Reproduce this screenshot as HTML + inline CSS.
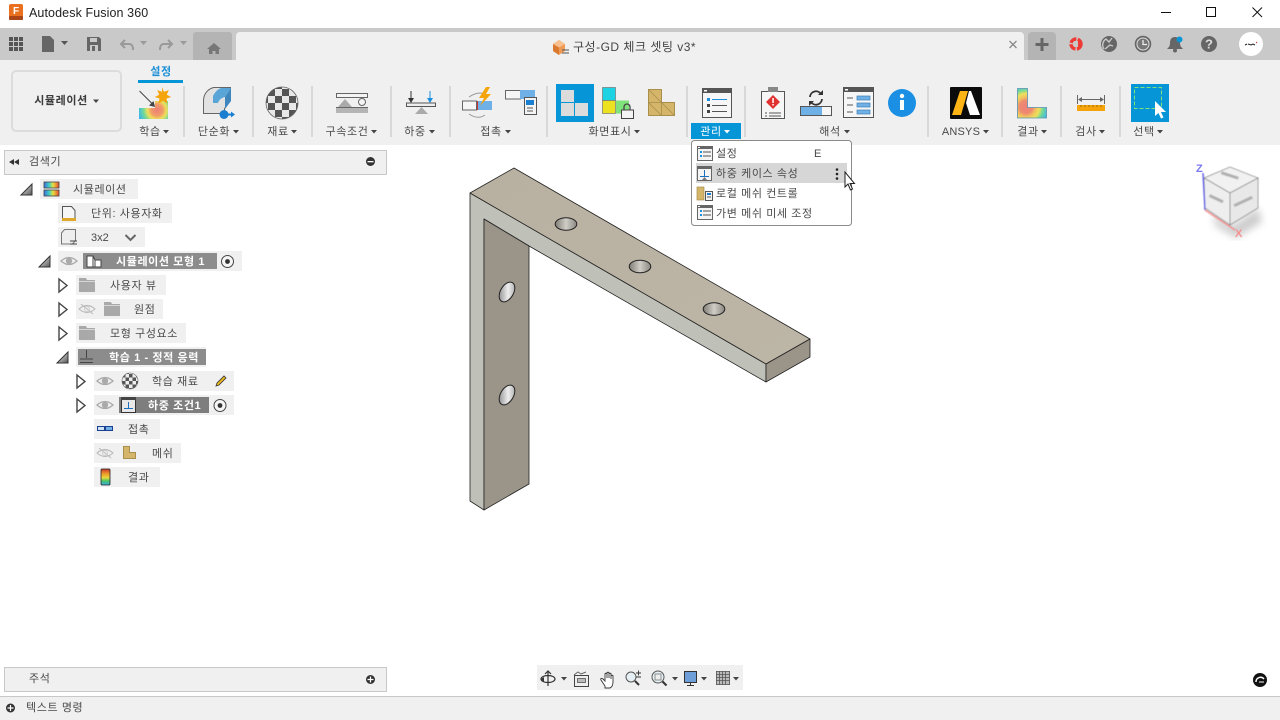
<!DOCTYPE html>
<html><head><meta charset="utf-8"><style>
html,body{margin:0;padding:0;background:#fff;width:1280px;height:720px;overflow:hidden}
svg{position:absolute;left:0;top:0}
text{font-family:"Liberation Sans","Noto Sans CJK KR",sans-serif;font-size:11px;fill:#4a4a4a;letter-spacing:.6px}
.m{text-anchor:middle}
.w{fill:#fff;font-weight:700}
.b{font-weight:700}
</style></head><body>
<svg width="1280" height="720" viewBox="0 0 1280 720" xmlns="http://www.w3.org/2000/svg">
<defs>
<filter id="bl"><feGaussianBlur stdDeviation="0.5"/></filter>
<filter id="bl3"><feGaussianBlur stdDeviation="4"/></filter>
<linearGradient id="tf" x1="0" y1="0" x2="1" y2="1"><stop offset="0" stop-color="#b8b0a0"/><stop offset="1" stop-color="#bdb6a7"/></linearGradient>
<linearGradient id="hole" x1="0" y1="0" x2="1" y2="0"><stop offset="0" stop-color="#7f7d75"/><stop offset=".5" stop-color="#cfcdc6"/><stop offset="1" stop-color="#8a8880"/></linearGradient>
<linearGradient id="hole2" x1="0" y1="1" x2="1" y2="0"><stop offset="0" stop-color="#777"/><stop offset=".55" stop-color="#eee"/><stop offset="1" stop-color="#999"/></linearGradient>
<linearGradient id="tri" x1="0" y1="0" x2="1" y2="1"><stop offset="0" stop-color="#fff"/><stop offset="1" stop-color="#555"/></linearGradient>
<linearGradient id="rain" x1="0" y1="0" x2="1" y2="0"><stop offset="0" stop-color="#3a6fe0"/><stop offset=".35" stop-color="#43d0c0"/><stop offset=".6" stop-color="#e6e040"/><stop offset="1" stop-color="#e84a30"/></linearGradient>
<linearGradient id="rainv" x1="0" y1="0" x2="0" y2="1"><stop offset="0" stop-color="#c8352b"/><stop offset=".3" stop-color="#ef9a2a"/><stop offset=".55" stop-color="#e6d83a"/><stop offset=".75" stop-color="#45c46a"/><stop offset="1" stop-color="#3aa8e0"/></linearGradient>
<radialGradient id="heat" gradientUnits="userSpaceOnUse" cx="157" cy="110" r="19"><stop offset="0" stop-color="#ee7f78"/><stop offset=".3" stop-color="#f09a68"/><stop offset=".5" stop-color="#eee05a"/><stop offset=".72" stop-color="#6fd89a"/><stop offset="1" stop-color="#3cb6ea"/></radialGradient>
<radialGradient id="heat2" gradientUnits="userSpaceOnUse" cx="1026" cy="107" r="23"><stop offset="0" stop-color="#ee7f78"/><stop offset=".28" stop-color="#ee8a70"/><stop offset=".42" stop-color="#f2c060"/><stop offset=".58" stop-color="#eee05a"/><stop offset=".75" stop-color="#6fd89a"/><stop offset="1" stop-color="#3cb6ea"/></radialGradient>
<pattern id="chk" width="14" height="14" patternUnits="userSpaceOnUse" x="268" y="89"><rect width="14" height="14" fill="#e8e8e8"/><rect width="7" height="7" fill="#555"/><rect x="7" y="7" width="7" height="7" fill="#555"/></pattern>
<pattern id="chk2" width="7" height="7" patternUnits="userSpaceOnUse" x="122" y="374"><rect width="7" height="7" fill="#eee"/><rect width="3.500" height="3.500" fill="#555"/><rect x="3.500" y="3.500" width="3.500" height="3.500" fill="#555"/></pattern>
<g id="eye"><path d="M-8 0Q0-7 8 0Q0 7-8 0Z" fill="none" stroke="#aaa" stroke-width="1.300"/><circle r="3.200" fill="#aaa"/></g>
<g id="eyeoff"><path d="M-8 0Q0-7 8 0Q0 7-8 0Z" fill="none" stroke="#bbb" stroke-width="1.100"/><path d="M-6-5L6 5" stroke="#bbb" stroke-width="1.100"/><circle r="2.500" fill="none" stroke="#ccc"/></g>
<g id="folder"><path d="M0 1h7l1 2h8v12H0Z" fill="#a9a9a9"/><rect y="4" width="16" height="1" fill="#d5d5d5"/></g>
<g id="closed"><path d="M1 0L9 6.500L1 13Z" fill="#fff" stroke="#444" stroke-width="1.400"/></g>
<g id="open"><path d="M11 0V11H0Z" fill="url(#tri)" stroke="#333" stroke-width="1"/></g>
<g id="radio"><circle r="6" fill="#f6f6f6" stroke="#444" stroke-width="1"/><circle r="2.400" fill="#333"/></g>
<g id="win"><rect x=".5" y=".5" width="15" height="14" fill="#f4f4f4" stroke="#666"/><rect width="16" height="3" fill="#666"/><rect x="1" y="1" width="2" height="1" fill="#fff"/><rect x="3" y="5" width="2" height="2" fill="#1a8fe0"/><rect x="3" y="9" width="2" height="2" fill="#1a8fe0"/><path d="M6 6h8M6 10h8" stroke="#555"/></g>
</defs>

<!-- title bar -->
<rect width="1280" height="28" fill="#fff"/>
<rect x="9" y="4" width="14" height="16" rx="2" fill="#e8701e"/><rect x="9" y="16" width="14" height="4" rx="1" fill="#a8461a"/>
<text x="13" y="14" style="font-size:10px;font-weight:700;fill:#fff;letter-spacing:0">F</text>
<text x="29" y="17" style="font-size:12.500px;fill:#222;letter-spacing:.1px">Autodesk Fusion 360</text>
<path d="M1161 12.500H1171" stroke="#111" stroke-width="1"/>
<rect x="1206.500" y="7.500" width="9" height="9" fill="none" stroke="#111"/>
<path d="M1252.500 7.500L1262 17M1262 7.500L1252.500 17" stroke="#111" stroke-width="1"/>

<!-- top gray bar -->
<rect y="28" width="1280" height="32" fill="#c9c9c9"/>
<rect x="193" y="32" width="39" height="28" rx="3" fill="#b4b4b4"/><rect x="193" y="50" width="39" height="10" fill="#b4b4b4"/>
<path d="M236 60V36a4 4 0 0 1 4-4H1020a4 4 0 0 1 4 4V60Z" fill="#f0f0f0"/>
<path d="M1028 60V36a4 4 0 0 1 4-4H1052a4 4 0 0 1 4 4V60Z" fill="#b4b4b4"/>
<path d="M1042 38V51M1035.500 44.500H1048.500" stroke="#666" stroke-width="3"/>
<!-- grid -->
<g fill="#555"><rect x="9" y="37" width="4" height="4"/><rect x="14" y="37" width="4" height="4"/><rect x="19" y="37" width="4" height="4"/><rect x="9" y="42" width="4" height="4"/><rect x="14" y="42" width="4" height="4"/><rect x="19" y="42" width="4" height="4"/><rect x="9" y="47" width="4" height="4"/><rect x="14" y="47" width="4" height="4"/><rect x="19" y="47" width="4" height="4"/></g>
<path d="M42 36h8l4 4v12H42Z" fill="#666"/><path d="M61 41h7l-3.500 4Z" fill="#555"/>
<path d="M87 37h12l2 2v12H87Z" fill="#666"/><rect x="90" y="38" width="7" height="4" fill="#c9c9c9"/><rect x="90" y="45" width="8" height="6" fill="#c9c9c9"/><rect x="92" y="46" width="3" height="5" fill="#666"/>
<path d="M125 40l-4 4 4 4M122 44h7c3 0 4 2 4 6" fill="none" stroke="#999" stroke-width="2"/><path d="M140 41h7l-3.500 4Z" fill="#999"/>
<path d="M168 40l4 4-4 4M171 44h-7c-3 0-4 2-4 6" fill="none" stroke="#999" stroke-width="2"/><path d="M180 41h7l-3.500 4Z" fill="#999"/>
<path d="M207 49l7-6 7 6h-2v5h-3.500v-3h-3v3H209v-5Z" fill="#777"/>
<!-- doc tab title -->
<path d="M553 44l6-4 6 4v7l-6 4-6-4Z" fill="#ef9a55"/><path d="M553 44l6 3.500 6-3.500-6-4Z" fill="#f7c08e"/><path d="M559 47.500V55l-6-4v-7Z" fill="#d97a30"/>
<path d="M562 50h7M562 53h7" stroke="#555"/>
<text x="573" y="51" style="font-size:12px;letter-spacing:.5px;fill:#444">구성-GD 체크 셋팅 v3*</text>
<path d="M1009.500 41l7 7M1016.500 41l-7 7" stroke="#888" stroke-width="1.300"/>
<!-- right icons -->
<circle cx="1076" cy="44" r="5" fill="none" stroke="#ee3a35" stroke-width="3.400" stroke-dasharray="7 1.400"/><rect x="1078" y="41" width="1.800" height="6" fill="#ee3a35"/>
<circle cx="1109" cy="44" r="8" fill="#666"/><path d="M1104 49a7 7 0 0 1 2-10l3 3 3-4M1105 49l5-4 3 1" fill="none" stroke="#c9c9c9" stroke-width="1.400"/>
<circle cx="1143" cy="44" r="7.500" fill="#777" stroke="#666" stroke-width="1.500"/><circle cx="1143" cy="44" r="6" fill="none" stroke="#ddd"/><path d="M1143 40v4.500h4" fill="none" stroke="#eee" stroke-width="1.300"/>
<path d="M1175 37c4 0 5 3 5 6s1 4 3 6h-16c2-2 3-3 3-6s1-6 5-6Z" fill="#666"/><circle cx="1175" cy="50.500" r="2" fill="#666"/><circle cx="1179.500" cy="39.500" r="3" fill="#0696d7"/>
<circle cx="1209" cy="44" r="8" fill="#666"/>
<text x="1209" y="48.500" class="m" style="font-size:13px;font-weight:700;fill:#ddd;letter-spacing:0">?</text>
<circle cx="1251" cy="44" r="12" fill="#fff"/><path d="M1245 45l2-1M1248 44l3 1 2-1 2 1" stroke="#222" fill="none"/><path d="M1256 43l1-1" stroke="#c33"/>

<!-- toolbar -->
<rect y="60" width="1280" height="85" fill="#f0f0f0"/>
<rect x="12" y="71" width="109" height="60" rx="4" fill="#f0f0f0" stroke="#dcdcdc" stroke-width="2"/>
<text x="61" y="104" class="m b" style="fill:#3c3c3c">시뮬레이션</text><path d="M93 99.500h6l-3 3.500Z" fill="#444"/>
<text x="161" y="75" class="m b" style="fill:#1a8fd6">설정</text>
<rect x="138" y="80" width="45" height="3" fill="#0696d7"/>
<g fill="#d8d8d8"><rect x="183" y="86" width="2" height="51"/><rect x="252" y="86" width="2" height="51"/><rect x="311" y="86" width="2" height="51"/><rect x="390" y="86" width="2" height="51"/><rect x="449" y="86" width="2" height="51"/><rect x="546" y="86" width="2" height="51"/><rect x="686" y="86" width="2" height="51"/><rect x="744" y="86" width="2" height="51"/><rect x="927" y="86" width="2" height="51"/><rect x="1001" y="86" width="2" height="51"/><rect x="1060" y="86" width="2" height="51"/><rect x="1119" y="86" width="2" height="51"/></g>

<!-- study -->
<path d="M139 108h16v-7h13v18h-29Z" fill="url(#heat)"/>
<path d="M139.500 91l13 13" stroke="#444" stroke-width="1"/><path d="M155 107l-6-1.500 4.500-4.500Z" fill="#444"/>
<path d="M162 87l1.900 4.700 4.900-1.600-2 4.700 4.400 2.200-4.700 1.500.9 5-4.400-2.700-4.400 2.700.9-5-4.700-1.500 4.400-2.200-2-4.700 4.900 1.600Z" fill="#f5a50b"/>
<!-- simplify -->
<path d="M203.500 113.500V101c0-8 5-12 10-13.500h17v13l-6 8v5Z" fill="#e2e2e2" stroke="#666" stroke-width="1"/>
<path d="M213 96c2-4 5-7 8-8h10l-6 9c-4 1-6 3-7 6h-5Z" fill="#5aa5d8"/><path d="M231 88v13l-6 8V97Z" fill="#3f86bd"/>
<circle cx="224" cy="114.500" r="4.500" fill="#1a7fd0"/><path d="M228 113.500h3v-2l4 3-4 3v-2h-3Z" fill="#1a7fd0"/>
<!-- material -->
<circle cx="282" cy="103" r="16" fill="url(#chk)"/>
<circle cx="282" cy="103" r="16" fill="none" stroke="#666" stroke-width=".8"/>
<!-- constraint -->
<rect x="336.500" y="93.500" width="31" height="4" fill="#f4f4f4" stroke="#666"/>
<path d="M338 107l7-8 7 8Z" fill="#aaa"/><circle cx="362" cy="102" r="3.500" fill="#f4f4f4" stroke="#666"/>
<rect x="336" y="107" width="32" height="6" fill="#b5b5b5"/><path d="M336 107.500H368" stroke="#666"/>
<!-- load -->
<path d="M411 91v11M430 91v11" stroke="#333" stroke-width="1"/><path d="M408 98l3 5 3-5Z" fill="#333"/><path d="M427 98l3 5 3-5Z" fill="#1a8fe0"/><path d="M430 91v7" stroke="#1a8fe0"/>
<rect x="406.500" y="103" width="29" height="3.500" fill="#eee" stroke="#555"/>
<path d="M415 114l6.500-7 6.500 7Z" fill="#aaa"/>
<!-- contact -->
<rect x="462.500" y="101" width="14" height="9" fill="#f6f6f6" stroke="#666"/><rect x="477" y="101" width="15" height="9" fill="#6fb0e6"/><rect x="477" y="101" width="1" height="9" fill="#c33"/>
<path d="M469 97q9-6 16-3M469 114q9 6 16 1" fill="none" stroke="#999" stroke-width="1"/>
<path d="M486 87l-7 11h5l-4 8 11-12h-5l4-7Z" fill="#f5a50b"/>
<rect x="505.500" y="90.500" width="15" height="8.500" fill="#f6f6f6" stroke="#666"/><rect x="520" y="90" width="15" height="9" fill="#6fb0e6"/>
<rect x="524.500" y="97.500" width="12" height="17" fill="#f4f4f4" stroke="#555"/><rect x="526" y="100" width="8" height="5" fill="#1a7fd0"/><path d="M527 108h6M527 111h6" stroke="#555"/>
<!-- display -->
<rect x="556" y="84" width="38" height="38" fill="#0696d7"/>
<rect x="561" y="90" width="13" height="12" fill="#dcdcdc"/><rect x="561" y="103" width="13" height="13" fill="#dcdcdc"/><rect x="575" y="103" width="13" height="13" fill="#dcdcdc"/>
<rect x="602.500" y="87.500" width="13" height="13" fill="#1dd3e3" stroke="#777" stroke-width=".7"/><rect x="602.500" y="100.500" width="13" height="13" fill="#ece220" stroke="#777" stroke-width=".7"/><rect x="616" y="100.500" width="13" height="13" fill="#7fe27a"/>
<path d="M624 110v-3a3 3 0 0 1 6 0v3" fill="none" stroke="#444" stroke-width="1.300"/><rect x="621.500" y="110" width="12" height="8.500" fill="#f4f4f4" stroke="#444"/>
<path d="M648.500 89.500h13v13h13v13h-26Z" fill="#d4b56a" stroke="#a88f4c"/><path d="M648.500 102.500h26M661.500 102.500v13M648.500 89.500l13 13M648.500 102.500l13 13M661.500 102.500l13 13" stroke="#a88f4c" fill="none" stroke-width=".8"/>
<!-- manage -->
<rect x="702.500" y="88.500" width="29" height="29" fill="#f6f6f6" stroke="#555"/><rect x="702" y="88" width="30" height="5" fill="#555"/><rect x="704" y="90" width="3" height="1.500" fill="#fff"/>
<rect x="707" y="98" width="3" height="3" fill="#1a8fe0"/><path d="M712 99.500h15" stroke="#1a8fe0"/><rect x="707" y="104" width="3" height="3" fill="#444"/><path d="M712 105.500h15" stroke="#555"/><rect x="707" y="110" width="3" height="3" fill="#444"/><path d="M712 111.500h15" stroke="#555"/>
<rect x="691" y="123" width="50" height="16" fill="#0696d7"/>
<!-- solve -->
<rect x="761.500" y="91.500" width="23" height="27" fill="#f6f6f6" stroke="#555"/><rect x="768" y="87" width="10" height="5" fill="#888"/>
<path d="M773 95l7 7-7 7-7-7Z" fill="#e03030"/><rect x="772.300" y="98" width="1.500" height="5" fill="#fff"/><rect x="772.300" y="104" width="1.500" height="1.500" fill="#fff"/>
<path d="M765 113h2M765 116h2M769 113h12M769 116h12" stroke="#555" stroke-width=".9"/>
<path d="M810 97a6 6 0 0 1 11-3M822 99a6 6 0 0 1-11 3" fill="none" stroke="#333" stroke-width="1.800"/><path d="M823 90v5h-5Z M809 106v-5h5Z" fill="#333"/>
<rect x="800.500" y="106.500" width="31" height="9" fill="#f6f6f6" stroke="#555"/><rect x="801" y="107" width="21" height="8" fill="#6fb0e6"/>
<rect x="843.500" y="87.500" width="30" height="30" fill="#f6f6f6" stroke="#555"/><rect x="843" y="87" width="31" height="5" fill="#555"/><rect x="845" y="89" width="3" height="1.500" fill="#fff"/>
<path d="M847 98h6M847 105h6M847 112h6" stroke="#555"/><rect x="857" y="96" width="13" height="4" fill="#6fb0e6" stroke="#3d7fb5" stroke-width=".7"/><rect x="857" y="103" width="13" height="4" fill="#6fb0e6" stroke="#3d7fb5" stroke-width=".7"/><rect x="857" y="110" width="13" height="4" fill="#6fb0e6" stroke="#3d7fb5" stroke-width=".7"/>
<circle cx="902" cy="103" r="14" fill="#1b8fe3"/><circle cx="902" cy="96" r="2.200" fill="#fff"/><rect x="900" y="100" width="4" height="10" fill="#fff"/>
<!-- ansys -->
<rect x="950" y="87" width="32" height="32" rx="1" fill="#0b0b0b"/>
<path d="M952 115L960 91H968L961 115Z" fill="#fdb515"/><path d="M969 91H971L980 115H970L966 103Z" fill="#fff"/>
<!-- results -->
<path d="M1017.500 88.500h10v19h19v10.500h-29Z" fill="url(#heat2)" stroke="#5a8fb0" stroke-width=".8"/>
<!-- inspect -->
<path d="M1077.500 95v9M1104.500 95v9M1079 99.500h24" stroke="#666" stroke-width="1"/><path d="M1082 97l-4 2.500 4 2.500ZM1100 97l4 2.500-4 2.500Z" fill="#666"/>
<rect x="1077" y="105" width="28" height="6" fill="#f5a50b"/><path d="M1081 105v2M1085 105v2M1089 105v2M1093 105v2M1097 105v2M1101 105v2" stroke="#8a5d00" stroke-width=".8"/>
<!-- select -->
<rect x="1131" y="84" width="38" height="38" fill="#0696d7"/>
<rect x="1134.500" y="87.500" width="27" height="21" fill="none" stroke="#7fe27a" stroke-dasharray="4 2"/>
<path d="M1155 101v15l3.500-3 2.500 5.500 2.500-1-2.500-5.500h5Z" fill="#fff"/>

<!-- ribbon labels -->
<text x="150" y="135" class="m">학습</text><path d="M163 130h6l-3 3.500Z" fill="#444"/>
<text x="214" y="135" class="m">단순화</text><path d="M233 130h6l-3 3.500Z" fill="#444"/>
<text x="278" y="135" class="m">재료</text><path d="M291 130h6l-3 3.500Z" fill="#444"/>
<text x="347" y="135" class="m">구속조건</text><path d="M371 130h6l-3 3.500Z" fill="#444"/>
<text x="415" y="135" class="m">하중</text><path d="M429 130h6l-3 3.500Z" fill="#444"/>
<text x="491" y="135" class="m">접촉</text><path d="M505 130h6l-3 3.500Z" fill="#444"/>
<text x="610" y="135" class="m">화면표시</text><path d="M634 130h6l-3 3.500Z" fill="#444"/>
<text x="711" y="135" class="m" style="fill:#fff">관리</text><path d="M724 130h6l-3 3.500Z" fill="#fff"/>
<text x="830" y="135" class="m">해석</text><path d="M844 130h6l-3 3.500Z" fill="#444"/>
<text x="961" y="135" class="m" style="letter-spacing:.2px">ANSYS</text><path d="M983 130h6l-3 3.500Z" fill="#444"/>
<text x="1028" y="135" class="m">결과</text><path d="M1041 130h6l-3 3.500Z" fill="#444"/>
<text x="1086" y="135" class="m">검사</text><path d="M1099 130h6l-3 3.500Z" fill="#444"/>
<text x="1144" y="135" class="m">선택</text><path d="M1157 130h6l-3 3.500Z" fill="#444"/>

<!-- model -->
<g stroke="#222" stroke-width=".8" stroke-linejoin="round">
<path d="M470 193L766 364V382L529 246L484 219V510L470 501Z" fill="#bfc0b8"/>
<path d="M484 219L529 246V484L484 510Z" fill="#9b9589"/>
<path d="M514 168L810 339L766 364L470 193Z" fill="url(#tf)"/>
<path d="M766 364L810 339V357L766 382Z" fill="#9b9589"/>
<ellipse cx="566" cy="224" rx="10.800" ry="6.300" fill="url(#hole)" stroke-width="1"/>
<ellipse cx="640" cy="266.500" rx="10.800" ry="6.300" fill="url(#hole)" stroke-width="1"/>
<ellipse cx="714" cy="309" rx="10.800" ry="6.300" fill="url(#hole)" stroke-width="1"/>
<ellipse cx="507" cy="292" rx="6.500" ry="10.800" transform="rotate(30 507 292)" fill="url(#hole2)" stroke-width="1"/>
<ellipse cx="507" cy="395" rx="6.500" ry="10.800" transform="rotate(30 507 395)" fill="url(#hole2)" stroke-width="1"/>
</g>

<!-- browser header -->
<rect x="4.500" y="150.500" width="382" height="24" fill="#f0f0f0" stroke="#c8c8c8"/>
<path d="M14 159l-5 3 5 3ZM19 159l-5 3 5 3Z" fill="#333"/>
<text x="29" y="165">검색기</text>
<circle cx="370.500" cy="161.500" r="4.500" fill="#333"/><rect x="367.500" y="161" width="6" height="1.300" fill="#fff"/>

<!-- tree rows -->
<g fill="#f0f0f0">
<rect x="40" y="179" width="98" height="20"/><rect x="58" y="203" width="114" height="20"/><rect x="58" y="227" width="87" height="20"/><rect x="58" y="251" width="184" height="20"/>
<rect x="76" y="275" width="90" height="20"/><rect x="76" y="299" width="87" height="20"/><rect x="76" y="323" width="110" height="20"/><rect x="76" y="347" width="130" height="20"/>
<rect x="94" y="371" width="140" height="20"/><rect x="94" y="395" width="140" height="20"/><rect x="94" y="419" width="66" height="20"/><rect x="94" y="443" width="87" height="20"/><rect x="94" y="467" width="66" height="20"/>
</g>
<use href="#open" x="21" y="184"/><use href="#open" x="39" y="256"/><use href="#open" x="57" y="352"/>
<use href="#closed" x="58" y="279"/><use href="#closed" x="58" y="303"/><use href="#closed" x="58" y="327"/><use href="#closed" x="76" y="375"/><use href="#closed" x="76" y="399"/>

<!-- row 1 -->
<rect x="44" y="182" width="15" height="6" fill="url(#rain)" stroke="#444" stroke-width=".8"/><rect x="44" y="190" width="15" height="6" fill="url(#rain)" stroke="#444" stroke-width=".8"/>
<text x="73" y="193">시뮬레이션</text>
<!-- units -->
<path d="M62.500 206.500h9l3.500 4v8h-12.500Z" fill="#f6f6f6" stroke="#555"/><rect x="62" y="218" width="14" height="3" fill="#e0a82a"/>
<text x="91" y="217">단위: 사용자화</text>
<!-- 3x2 -->
<path d="M61.500 233l3-3.500h11v11l-3 3.500h-11Z" fill="#eee" stroke="#777"/><path d="M70 241h7M70 244h7" stroke="#444"/>
<text x="91" y="241" style="letter-spacing:0">3x2</text>
<path d="M125.500 235l5 5 5-5" fill="none" stroke="#666" stroke-width="2"/>
<!-- model row -->
<use href="#eye" x="69" y="261"/>
<rect x="83" y="253" width="134" height="16" fill="#8c8c8c"/>
<path d="M87 256h6l2 4h6v7H87Z" fill="#fff" stroke="#444"/><path d="M93 256v11M95 260v7" stroke="#444"/>
<text x="116" y="265" class="w">시뮬레이션 모형 1</text>
<use href="#radio" x="227.500" y="261.500"/>
<!-- folders -->
<use href="#folder" x="79" y="277"/><text x="110" y="289">사용자 뷰</text>
<use href="#eyeoff" x="87" y="309"/><use href="#folder" x="104" y="301"/><text x="134" y="313">원점</text>
<use href="#folder" x="79" y="325"/><text x="110" y="337">모형 구성요소</text>
<!-- study row -->
<rect x="78" y="349" width="128" height="16" fill="#8c8c8c"/>
<path d="M86.500 350v8M80 359h13M80 362.500h13" stroke="#444" fill="none"/>
<text x="109" y="361" class="w">학습 1 - 정적 응력</text>
<!-- material -->
<use href="#eye" x="105" y="381"/><circle cx="130" cy="381" r="8" fill="url(#chk2)" stroke="#666" stroke-width=".6"/>
<text x="152" y="385">학습 재료</text>
<path d="M216 386l1-3 7-7 2 2-7 7Z" fill="#e9b520" stroke="#333" stroke-width=".8"/>
<!-- load cond -->
<use href="#eye" x="105" y="405"/>
<rect x="119" y="397" width="90" height="16" fill="#7e7e7e"/>
<rect x="121.500" y="397.500" width="14" height="15" fill="#e8e8e8" stroke="#333"/><rect x="121" y="397" width="15" height="3" fill="#444"/><path d="M128.500 402v6M124 408.500h9" stroke="#1a6fc0"/>
<text x="148" y="409" class="w">하중 조건1</text>
<use href="#radio" x="220" y="405.500"/>
<!-- contact -->
<rect x="97.500" y="426.500" width="7" height="4" fill="#cfe3f5" stroke="#1a3f90"/><rect x="105.500" y="426.500" width="7" height="4" fill="#6fb0e6" stroke="#1a3f90"/>
<text x="128" y="433">접촉</text>
<!-- mesh -->
<use href="#eyeoff" x="105" y="453"/>
<path d="M123.500 446.500h6v6h6v6h-12Z" fill="#d4b56a" stroke="#a88f4c"/>
<text x="152" y="457">메쉬</text>
<!-- results -->
<rect x="101" y="469" width="9" height="16" rx="1" fill="url(#rainv)" stroke="#222" stroke-width=".8"/>
<text x="128" y="481">결과</text>

<!-- dropdown -->
<rect x="691.500" y="140.500" width="160" height="85" rx="3" fill="#fff" stroke="#8a8a8a"/>
<rect x="696" y="163" width="151" height="20" fill="#d6d6d6"/>
<use href="#win" x="697" y="146"/><text x="716" y="157">설정</text><text x="814" y="157" style="letter-spacing:0">E</text>
<rect x="697.500" y="166.500" width="14" height="14" fill="#f4f4f4" stroke="#666"/><rect x="697" y="166" width="15" height="3" fill="#666"/><path d="M704.500 170v6M700 176.500h9" stroke="#1a6fc0"/><path d="M702 180l2.500-3 2.500 3Z" fill="#777"/>
<text x="716" y="177">하중 케이스 속성</text>
<circle cx="837" cy="169.500" r="1.300" fill="#222"/><circle cx="837" cy="174" r="1.300" fill="#222"/><circle cx="837" cy="178.500" r="1.300" fill="#222"/>
<rect x="697" y="187" width="7" height="13" fill="#d4b56a" stroke="#a88f4c" stroke-width=".7"/><rect x="705.500" y="191.500" width="7" height="9" fill="#f4f4f4" stroke="#555"/><rect x="707" y="193" width="4" height="2" fill="#1a7fd0"/><path d="M707 197h4" stroke="#555"/>
<text x="716" y="197">로컬 메쉬 컨트롤</text>
<use href="#win" x="697" y="205"/><text x="716" y="217">가변 메쉬 미세 조정</text>
<path d="M845 172v15l3-3 2.500 6 2-1-2.500-5.500h4.500Z" fill="#fff" stroke="#222" stroke-width="1"/>

<!-- view cube -->
<path d="M1212 214L1232 226L1258 208L1262 222L1236 238L1216 226Z" fill="#ccc" filter="url(#bl3)"/>
<g filter="url(#bl)">
<path d="M1204 178L1230 167L1258 178L1230 193Z" fill="#f1f1f1" stroke="#8a8a8a" stroke-width=".8"/>
<path d="M1204 178L1230 193V225L1205 208Z" fill="#eeeeee" stroke="#8a8a8a" stroke-width=".8"/>
<path d="M1230 193L1258 178V208L1230 225Z" fill="#e8e8e8" stroke="#8a8a8a" stroke-width=".8"/>
<path d="M1203 173L1205 210" stroke="#5a5ae8" stroke-width="1.400"/>
<path d="M1205 210L1235 230" stroke="#ef8f8f" stroke-width="1.400"/>
<g fill="#b0b0b0"><rect x="1221" y="174" width="18" height="3" transform="rotate(18 1230 175)"/><rect x="1209" y="197" width="15" height="3" transform="rotate(25 1216 198)"/><rect x="1233" y="200" width="20" height="3" transform="rotate(-25 1243 201)"/></g>
</g>
<text x="1196" y="172" style="font-size:11px;fill:#7878f0;font-weight:700;letter-spacing:0">Z</text>
<text x="1235" y="237" style="font-size:11px;fill:#f59090;font-weight:700;letter-spacing:0">X</text>

<!-- annotation panel -->
<rect x="4.500" y="667.500" width="382" height="24" fill="#f0f0f0" stroke="#c8c8c8"/>
<text x="29" y="682">주석</text>
<circle cx="370.500" cy="679.500" r="4.500" fill="#333"/><path d="M367.500 679.500h6M370.500 676.500v6" stroke="#fff" stroke-width="1.200"/>
<!-- text command -->
<rect y="696" width="1280" height="24" fill="#f0f0f0"/><rect y="696" width="1280" height="1" fill="#c8c8c8"/>
<circle cx="10.500" cy="708" r="4.500" fill="#333"/><path d="M7.500 708h6M10.500 705v6" stroke="#fff" stroke-width="1.200"/>
<text x="26" y="711">텍스트 명령</text>

<!-- nav toolbar -->
<rect x="537" y="665" width="206" height="25" fill="#f0f0f0"/>
<path d="M548 671v15M545 674l3-3 3 3" fill="none" stroke="#333" stroke-width="1.200"/><ellipse cx="548" cy="679" rx="7" ry="3.500" fill="none" stroke="#333" stroke-width="1.200"/><path d="M541 679l3 3v-5Z" fill="#333"/>
<path d="M561 677h6l-3 3.500Z" fill="#444"/>
<rect x="574.500" y="675.500" width="14" height="11" fill="#eee" stroke="#444"/><rect x="577.500" y="678.500" width="8" height="4" fill="#bbb" stroke="#444" stroke-width=".7"/><path d="M574 675l4-3 3 2 5-2" fill="none" stroke="#666"/>
<path d="M605 686l-4-6c-1-2 1-2 2-1l2 2v-7c0-1 2-1 2 0v4-5c0-1 2-1 2 0v5-4c0-1 2-1 2 0v5-3c0-1 2-1 2 0v6c0 3-1 5-3 6h-5Z" fill="#fff" stroke="#333" stroke-width=".9"/>
<circle cx="631" cy="677" r="5" fill="#e6f0f4" stroke="#555"/><path d="M635 681l4 4" stroke="#333" stroke-width="2"/><path d="M636 673h5M638.500 670.500v5M636 677h5" stroke="#333" stroke-width=".9"/>
<circle cx="658" cy="677" r="6" fill="#e6f0f4" stroke="#555"/><rect x="655" y="674" width="6" height="6" fill="#eee" stroke="#777" stroke-width=".8"/><path d="M662.500 681.500l4 4" stroke="#333" stroke-width="2"/>
<path d="M672 677h6l-3 3.500Z" fill="#444"/>
<rect x="684.500" y="671.500" width="12" height="11" fill="#6f9fd8" stroke="#333"/><path d="M690.500 683v2M687 685.500h7" stroke="#333"/><path d="M701 677h6l-3 3.500Z" fill="#444"/>
<rect x="716" y="671" width="14" height="14" fill="#bbb"/><path d="M716.500 671v14M719.500 671v14M722.500 671v14M725.500 671v14M729.500 671v14M716 671.500h14M716 674.500h14M716 677.500h14M716 680.500h14M716 684.500h14" stroke="#555" stroke-width=".8"/><path d="M733 677h6l-3 3.500Z" fill="#444"/>

<!-- bottom right -->
<circle cx="1260" cy="680" r="7" fill="#111"/><path d="M1256 682a4.500 4.500 0 0 1 8-3" fill="none" stroke="#fff" stroke-width="1.400"/><path d="M1259 682h5" stroke="#fff" stroke-width="1"/>
</svg>
</body></html>
